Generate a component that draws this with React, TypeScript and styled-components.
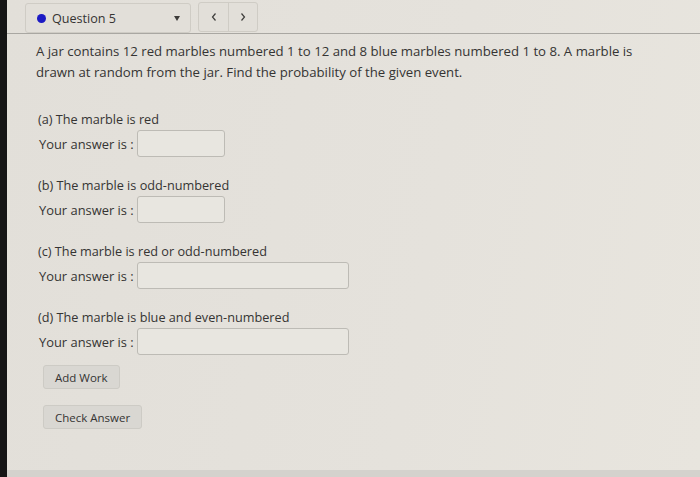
import styled, { createGlobalStyle } from "styled-components";

const GlobalStyle = createGlobalStyle`
  html, body {
    margin: 0;
    padding: 0;
    background: #e4e1da;
  }
  * {
    box-sizing: border-box;
  }
`;

const Screen = styled.div`
  display: flex;
  width: 700px;
  height: 477px;
  overflow: hidden;
  font-family: "Open Sans", "Liberation Sans", sans-serif;
  color: #353433;
`;

const Bezel = styled.div`
  width: 7px;
  background: #151515;
  flex-shrink: 0;
`;

const Page = styled.div`
  flex: 1;
  display: flex;
  flex-direction: column;
  background: linear-gradient(100deg, #e2dfd9 0%, #e5e2dc 60%, #e8e5de 100%);
`;

const Header = styled.div`
  height: 34px;
  flex-shrink: 0;
  display: flex;
  align-items: flex-start;
  gap: 7px;
  padding: 3px 0 0 18px;
  border-bottom: 1px solid #a9a7a2;
`;

const QuestionSelect = styled.div`
  width: 166px;
  height: 30px;
  display: flex;
  align-items: center;
  padding: 0 10px 0 11px;
  border: 1px solid #cfccc5;
  border-radius: 3px;
  background: #e2dfd9;
  font-size: 12.6px;
`;

const Dot = styled.span`
  width: 9px;
  height: 9px;
  border-radius: 50%;
  background: #1c1ac4;
  margin-right: 6px;
`;

const SelectLabel = styled.span`
  flex: 1;
`;

const Caret = styled.span`
  width: 0;
  height: 0;
  border-left: 3px solid transparent;
  border-right: 3px solid transparent;
  border-top: 5px solid #3d3c3a;
`;

const NavGroup = styled.div`
  display: flex;
  height: 30px;
  margin-top: -1px;
  border: 1px solid #cfccc5;
  border-radius: 3px;
  background: #e2dfd9;
`;

const NavButton = styled.div<{ $divider?: boolean }>`
  width: 29px;
  display: flex;
  align-items: center;
  justify-content: center;
  border-left: ${(p) => (p.$divider ? "1px solid #cfccc5" : "none")};
`;

const Content = styled.div`
  flex: 1;
  display: flex;
  flex-direction: column;
  padding: 7px 20px 0 29px;
`;

const Prompt = styled.p`
  margin: 0 0 27px;
  font-size: 13.2px;
  line-height: 21px;
  width: 620px;
`;

const Part = styled.div`
  display: flex;
  flex-direction: column;
  margin-bottom: 19px;
  padding-left: 2px;
`;

const PartLabel = styled.div`
  font-size: 12.7px;
  line-height: 18px;
  margin-bottom: 2px;
`;

const AnswerRow = styled.div`
  display: flex;
  align-items: center;
  font-size: 12.9px;
  gap: 3px;
  padding-left: 1px;
`;

const AnswerBox = styled.div<{ $wide?: boolean }>`
  width: ${(p) => (p.$wide ? "212px" : "88px")};
  height: 27px;
  border: 1px solid #bdbbb5;
  border-radius: 3px;
  background: #e8e6e0;
`;

const Actions = styled.div`
  display: flex;
  flex-direction: column;
  align-items: flex-start;
  gap: 16px;
  padding-left: 7px;
  margin-top: -9px;
`;

const ActionButton = styled.div`
  height: 24px;
  padding: 0 11px;
  display: flex;
  align-items: center;
  font-size: 11.5px;
  border: 1px solid #cdcbc5;
  border-radius: 3px;
  background: #d9d7d2;
`;

const Footer = styled.div`
  height: 7px;
  background: #d4d2cd;
  margin-top: auto;
`;

function Chevron({ dir }: { dir: "left" | "right" }) {
  return (
    <svg width="8" height="10" viewBox="0 0 8 10">
      <path
        d={dir === "left" ? "M5.5 1.5 L2.5 5 L5.5 8.5" : "M2.5 1.5 L5.5 5 L2.5 8.5"}
        fill="none"
        stroke="#3d3c3a"
        strokeWidth="1.2"
      />
    </svg>
  );
}

const parts = [
  { label: "(a) The marble is red", wide: false },
  { label: "(b) The marble is odd-numbered", wide: false },
  { label: "(c) The marble is red or odd-numbered", wide: true },
  { label: "(d) The marble is blue and even-numbered", wide: true },
];

export default function App() {
  return (
    <>
      <GlobalStyle />
      <Screen>
        <Bezel />
        <Page>
          <Header>
            <QuestionSelect>
              <Dot />
              <SelectLabel>Question 5</SelectLabel>
              <Caret />
            </QuestionSelect>
            <NavGroup>
              <NavButton>
                <Chevron dir="left" />
              </NavButton>
              <NavButton $divider>
                <Chevron dir="right" />
              </NavButton>
            </NavGroup>
          </Header>
          <Content>
            <Prompt>
              A jar contains 12 red marbles numbered 1 to 12 and 8 blue marbles
              numbered 1 to 8. A marble is drawn at random from the jar. Find the
              probability of the given event.
            </Prompt>
            {parts.map((part) => (
              <Part key={part.label}>
                <PartLabel>{part.label}</PartLabel>
                <AnswerRow>
                  Your answer is :
                  <AnswerBox $wide={part.wide} />
                </AnswerRow>
              </Part>
            ))}
            <Actions>
              <ActionButton>Add Work</ActionButton>
              <ActionButton>Check Answer</ActionButton>
            </Actions>
          </Content>
          <Footer />
        </Page>
      </Screen>
    </>
  );
}
